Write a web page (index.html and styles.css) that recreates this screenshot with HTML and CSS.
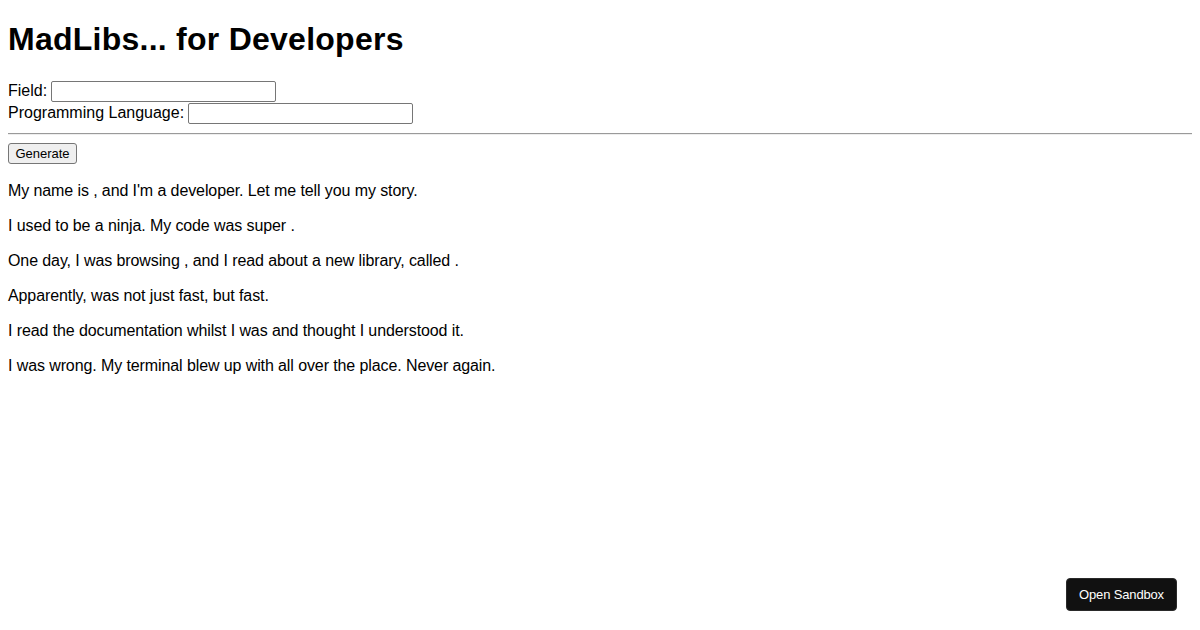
FILE: index.html
```html
<!DOCTYPE html>
<html>
<head>
<meta charset="utf-8">
<title>MadLibs</title>
<link rel="stylesheet" href="styles.css">
</head>
<body>
<h1 class="title">MadLibs... for Developers</h1>
<div class="form">
<label class="row"><span class="lbl">Field:</span><input type="text" class="inp"></label>
<label class="row"><span class="lbl">Programming Language:</span><input type="text" class="inp"></label>
<hr class="rule">
<button class="gen">Generate</button>
</div>
<div class="story">
<p class="line">My name is , and I'm a developer. Let me tell you my story.</p>
<p class="line">I used to be a ninja. My code was super .</p>
<p class="line">One day, I was browsing , and I read about a new library, called .</p>
<p class="line">Apparently, was not just fast, but fast.</p>
<p class="line">I read the documentation whilst I was and thought I understood it.</p>
<p class="line">I was wrong. My terminal blew up with all over the place. Never again.</p>
</div>
<a class="sandbox">Open Sandbox</a>
</body>
</html>
```
FILE: styles.css
```css
html, body {
  font-family: "Liberation Sans", Arial, sans-serif;
  background: #fff;
  color: #000;
}
body {
  margin: 0;
  padding: 0 8px 8px;
}
.title {
  font-size: 32px;
  line-height: 37px;
  font-weight: bold;
  letter-spacing: 0.25px;
  margin: 21px 0 22px;
}
.form {
  font-size: 16px;
}
.row {
  display: flex;
  align-items: center;
  gap: 4px;
  height: 22px;
}
.lbl {
  line-height: 19px;
  position: relative;
  top: -1px;
}
.inp {
  box-sizing: border-box;
  width: 225px;
  height: 21px;
  margin: 0;
  padding: 1px 2px;
  border: 1px solid #767676;
  border-radius: 2px;
  font-family: "Liberation Sans", Arial, sans-serif;
  font-size: 13px;
  background: #fff;
}
.rule {
  margin: 9px 0 8px;
  height: 0;
  border: none;
  border-top: 1px solid #9a9a9a;
  border-bottom: 1px solid #eeeeee;
}
.gen {
  box-sizing: border-box;
  display: block;
  width: 69px;
  height: 21px;
  padding: 0;
  margin: 0;
  font-family: "Liberation Sans", Arial, sans-serif;
  font-size: 13px;
  color: #000;
  background: #efefef;
  border: 1px solid #767676;
  border-radius: 3px;
}
.story {
  font-size: 16px;
  letter-spacing: -0.1px;
  padding-top: 1px;
}
.line {
  margin: 16px 0;
  line-height: 19px;
}
.sandbox {
  position: fixed;
  right: 23px;
  bottom: 19px;
  box-sizing: border-box;
  width: 111px;
  height: 33px;
  line-height: 31px;
  text-align: center;
  background: #111;
  color: #fff;
  font-size: 13px;
  letter-spacing: -0.15px;
  border-radius: 4px;
  border: 1px solid #2a2a2a;
  cursor: pointer;
}
```
